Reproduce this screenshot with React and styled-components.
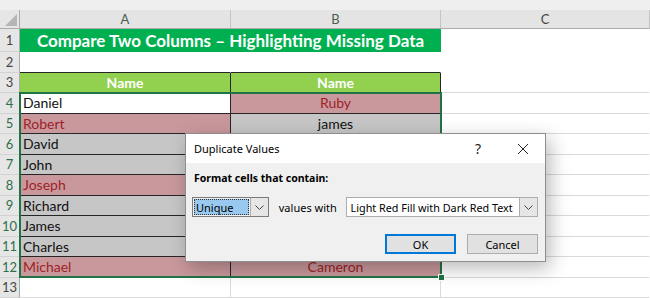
import React from 'react';
import styled, { createGlobalStyle } from 'styled-components';

const GlobalStyle = createGlobalStyle`
  html, body { margin: 0; padding: 0; background: #fff; overflow: hidden; }
  #root { width: 650px; height: 298px; }
  * { box-sizing: border-box; }
`;

const Window = styled.div`
  position: relative;
  width: 650px;
  height: 298px;
  overflow: hidden;
  background: #fff;
  font-family: Lato, "Liberation Sans", sans-serif;
`;

const TopStrip = styled.div`
  height: 10px;
  background: #efefef;
`;

const Grid = styled.div`
  display: grid;
  grid-template-columns: 20px 211px 210px 1fr;
  grid-template-rows: 19px 23px 20.5px 20.5px repeat(9, 20.5px) 1fr;
  height: 288px;
`;

const Corner = styled.div`
  background: #e6e6e6;
  border-right: 1px solid #ababab;
  border-bottom: 1px solid #ababab;
  display: flex;
  align-items: flex-end;
  justify-content: flex-end;
  padding: 0 2px 2px 0;
`;

const ColHeader = styled.div`
  background: #e4e4e4;
  border-right: 1px solid #c4c4c4;
  border-bottom: 1px solid #ababab;
  display: flex;
  align-items: flex-end;
  justify-content: center;
  padding-bottom: 1px;
  font-size: 13px;
  line-height: 16px;
  color: ${(p) => (p.$selected ? '#4a5f52' : '#444')};
`;

const RowHeader = styled.div`
  background: #e6e6e6;
  border-right: 1px solid #ababab;
  border-bottom: 1px solid #d2d2d2;
  display: flex;
  align-items: center;
  justify-content: center;
  font-size: 13px;
  color: ${(p) => (p.$selected ? '#2f6e4b' : '#444')};
`;

const fills = {
  white: '#ffffff',
  pink: '#c9989c',
  gray: '#c6c6c6',
  name: '#92d050',
};

const Cell = styled.div`
  background: ${(p) => fills[p.$fill || 'white']};
  border-right: 1px solid ${(p) => p.$right || 'transparent'};
  border-bottom: 1px solid ${(p) => p.$bottom || 'transparent'};
  display: flex;
  align-items: center;
  justify-content: ${(p) => (p.$center ? 'center' : 'flex-start')};
  padding-left: ${(p) => (p.$center ? '0' : '3px')};
  font-size: 14px;
  font-weight: ${(p) => (p.$bold ? 700 : 400)};
  color: ${(p) => p.$color || '#111'};
  white-space: nowrap;
  overflow: hidden;
`;

const TitleCell = styled.div`
  grid-column: 2 / 4;
  background: #00b050;
  color: #fff;
  font-weight: 700;
  font-size: 17px;
  display: flex;
  align-items: center;
  justify-content: center;
  white-space: nowrap;
`;

const Selection = styled.div`
  position: absolute;
  left: 19px;
  top: 92px;
  width: 423px;
  height: 186px;
  border: 2px solid #217346;
  pointer-events: none;
`;

const FillHandle = styled.div`
  position: absolute;
  right: -5px;
  bottom: -5px;
  width: 7px;
  height: 7px;
  background: #217346;
  border: 1px solid #fff;
`;

const Dialog = styled.div`
  position: absolute;
  left: 185px;
  top: 133px;
  width: 361px;
  height: 129px;
  border: 1px solid #8e8e8e;
  background: #f0f0f0;
  box-shadow: 4px 6px 18px rgba(0, 0, 0, 0.28);
  display: flex;
  flex-direction: column;
  font-family: "Noto Sans", "Open Sans", sans-serif;
  font-size: 11px;
  color: #000;
`;

const TitleBar = styled.div`
  height: 29px;
  background: #fff;
  display: flex;
  align-items: center;
  padding: 0 16px 0 8px;
`;

const TitleText = styled.div`
  flex: 1;
  font-size: 11px;
`;

const HelpGlyph = styled.div`
  width: 14px;
  text-align: center;
  font-size: 14px;
  line-height: 14px;
  margin-right: 32px;
  color: #222;
`;

const CloseIcon = styled.svg`
  width: 12px;
  height: 12px;
  display: block;
`;

const Body = styled.div`
  flex: 1;
  display: flex;
  flex-direction: column;
  padding: 0 7px 0 6px;
`;

const Label = styled.div`
  margin-top: 8px;
  line-height: 14px;
  font-weight: 700;
  font-size: 10.5px;
  padding-left: 2px;
`;

const ControlRow = styled.div`
  margin-top: 12px;
  height: 20px;
  display: flex;
  align-items: center;
`;

const Combo = styled.div`
  width: ${(p) => p.$width}px;
  height: 20px;
  border: 1px solid ${(p) => (p.$focused ? '#7a7a7a' : '#adadad')};
  background: ${(p) => (p.$focused ? '#f0f0f0' : '#fff')};
  display: flex;
  align-items: stretch;
`;

const ComboValue = styled.div`
  flex: 1;
  display: flex;
  align-items: center;
  padding-left: ${(p) => (p.$focused ? '0' : '4px')};
  margin: ${(p) => (p.$focused ? '1px' : '0')};
  font-size: ${(p) => (p.$focused ? '11px' : '10.8px')};
  white-space: nowrap;
  overflow: hidden;
`;

const Highlight = styled.span`
  display: flex;
  align-items: center;
  height: 100%;
  width: 100%;
  padding-left: 2px;
  background: #99c9ef;
  outline: 1px dotted #333;
  outline-offset: -1px;
`;

const DropButton = styled.div`
  width: 18px;
  background: #e6e6e6;
  border-left: 1px solid #adadad;
  display: flex;
  align-items: center;
  justify-content: center;
`;

const ValuesLabel = styled.div`
  width: 67px;
  margin-left: 10px;
  white-space: nowrap;
`;

const ButtonRow = styled.div`
  margin-top: 17px;
  display: flex;
  justify-content: flex-end;
  gap: 11px;
`;

const Button = styled.div`
  width: 71px;
  height: 20px;
  background: #e1e1e1;
  border: ${(p) => (p.$primary ? '2px solid #0078d7' : '1px solid #adadad')};
  display: flex;
  align-items: center;
  justify-content: center;
`;

const CornerTriangle = () => (
  <svg width="12" height="12" viewBox="0 0 12 12">
    <polygon points="12,0 12,12 0,12" fill="#b5b5b5" />
  </svg>
);

const Chevron = () => (
  <svg width="9" height="5" viewBox="0 0 9 5">
    <polyline points="0.5,0.5 4.5,4.5 8.5,0.5" fill="none" stroke="#444" strokeWidth="1" />
  </svg>
);

const RED = '#9e1f27';
const DARK = '#262626';
const GRID = '#dadada';

const data = [
  { n: 4, a: ['Daniel', 'white'], b: ['Ruby', 'pink'] },
  { n: 5, a: ['Robert', 'pink'], b: ['james', 'gray'] },
  { n: 6, a: ['David', 'gray'], b: ['', 'gray'] },
  { n: 7, a: ['John', 'gray'], b: ['', 'gray'] },
  { n: 8, a: ['Joseph', 'pink'], b: ['', 'gray'] },
  { n: 9, a: ['Richard', 'gray'], b: ['', 'gray'] },
  { n: 10, a: ['James', 'gray'], b: ['', 'gray'] },
  { n: 11, a: ['Charles', 'gray'], b: ['', 'gray'] },
  { n: 12, a: ['Michael', 'pink'], b: ['Cameron', 'pink'] },
];

export default function App() {
  return (
    <Window>
      <GlobalStyle />
      <TopStrip />
      <Grid>
        <Corner><CornerTriangle /></Corner>
        <ColHeader $selected>A</ColHeader>
        <ColHeader $selected>B</ColHeader>
        <ColHeader>C</ColHeader>

        <RowHeader>1</RowHeader>
        <TitleCell>Compare Two Columns – Highlighting Missing Data</TitleCell>
        <Cell />

        <RowHeader>2</RowHeader>
        <Cell $bottom={DARK} />
        <Cell $bottom={DARK} />
        <Cell />

        <RowHeader>3</RowHeader>
        <Cell $fill="name" $center $bold $color="#fff" $right={DARK} $bottom={DARK}>Name</Cell>
        <Cell $fill="name" $center $bold $color="#fff" $right={DARK} $bottom={DARK}>Name</Cell>
        <Cell $bottom={GRID} />

        {data.map((r) => (
          <React.Fragment key={r.n}>
            <RowHeader $selected>{r.n}</RowHeader>
            <Cell $fill={r.a[1]} $right={DARK} $bottom={DARK} $color={r.a[1] === 'pink' ? RED : '#111'}>
              {r.a[0]}
            </Cell>
            <Cell $fill={r.b[1]} $center $right={DARK} $bottom={DARK} $color={r.b[1] === 'pink' ? RED : '#111'}>
              {r.b[0]}
            </Cell>
            <Cell $bottom={GRID} />
          </React.Fragment>
        ))}

        <RowHeader>13</RowHeader>
        <Cell $right={GRID} $bottom={GRID} />
        <Cell $right={GRID} $bottom={GRID} />
        <Cell $bottom={GRID} />
      </Grid>

      <Selection>
        <FillHandle />
      </Selection>

      <Dialog>
        <TitleBar>
          <TitleText>Duplicate Values</TitleText>
          <HelpGlyph>?</HelpGlyph>
          <CloseIcon viewBox="0 0 12 12">
            <line x1="1" y1="1" x2="11" y2="11" stroke="#222" strokeWidth="1" />
            <line x1="11" y1="1" x2="1" y2="11" stroke="#222" strokeWidth="1" />
          </CloseIcon>
        </TitleBar>
        <Body>
          <Label>Format cells that contain:</Label>
          <ControlRow>
            <Combo $width={77} $focused>
              <ComboValue $focused><Highlight>Unique</Highlight></ComboValue>
              <DropButton><Chevron /></DropButton>
            </Combo>
            <ValuesLabel>values with</ValuesLabel>
            <Combo $width={193}>
              <ComboValue>Light Red Fill with Dark Red Text</ComboValue>
              <DropButton><Chevron /></DropButton>
            </Combo>
          </ControlRow>
          <ButtonRow>
            <Button $primary>OK</Button>
            <Button>Cancel</Button>
          </ButtonRow>
        </Body>
      </Dialog>
    </Window>
  );
}
